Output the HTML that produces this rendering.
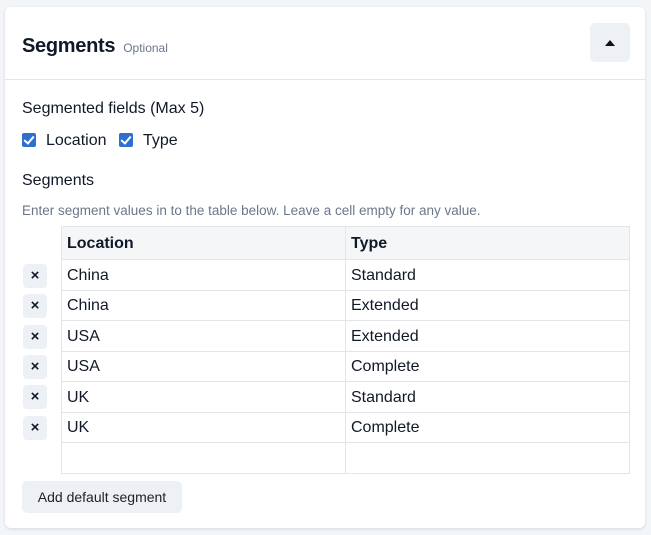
<!DOCTYPE html>
<html><head><style>
body{margin:0;background:#f3f6f9;font-family:"Liberation Sans",sans-serif;color:#111827;width:651px;height:535px;overflow:hidden;position:relative}
.card{position:absolute;left:5px;top:7px;width:640px;height:521px;background:#fff;border-radius:6px;box-shadow:0 1px 3px rgba(0,0,0,.12)}
.hdr{position:absolute;left:0;top:0;width:640px;height:72px;border-bottom:1px solid #e2e6ec}
.t{position:absolute;left:17px;top:28px;font-size:20px;font-weight:bold;letter-spacing:-0.3px}
.opt{font-size:12px;font-weight:normal;color:#6b7789;margin-left:8px;letter-spacing:0}
.tb{position:absolute;left:585px;top:16px;width:40px;height:39px;background:#edf1f5;border-radius:5px}
.tb:after{content:"";position:absolute;left:15px;top:17px;border-left:5px solid transparent;border-right:5px solid transparent;border-bottom:6px solid #111}
.a{position:absolute;font-size:16px}
.cb{display:inline-block;width:14px;height:14px;background:#2f6fce;border-radius:2px;vertical-align:-2px;position:relative;margin-right:10px}
.cb:after{content:"";position:absolute;left:4px;top:1px;width:4px;height:8px;border:solid #fff;border-width:0 2px 2px 0;transform:rotate(40deg)}
table{position:absolute;left:56px;top:219px;width:569px;border-collapse:collapse;font-size:16px}
td,th{border:1px solid #e3e5e8;height:27.5px;padding:2px 5px 0;text-align:left;width:50%}
th{background:#f5f6f8;height:30px}
.x{position:absolute;left:18px;width:24px;height:24px;background:#edf1f5;border-radius:4px;font-size:15px;font-weight:bold;text-align:center;line-height:24px}
.btn{position:absolute;left:17px;top:474px;width:160px;height:32px;background:#edf1f5;border-radius:5px;font-size:14px;line-height:32px;text-align:center;color:#222}
</style></head><body>
<div class="card">
<div class="hdr"><div class="t">Segments<span class="opt">Optional</span></div><div class="tb"></div></div>
<div class="a" style="left:17px;top:93px">Segmented fields (Max 5)</div>
<div class="a" style="left:17px;top:125px"><span class="cb"></span>Location <span class="cb" style="margin-left:8px"></span>Type</div>
<div class="a" style="left:17px;top:165px">Segments</div>
<div class="a" style="left:17px;top:196px;font-size:13.5px;color:#6b7789">Enter segment values in to the table below. Leave a cell empty for any value.</div>
<table>
<tr><th>Location</th><th>Type</th></tr>
<tr><td>China</td><td>Standard</td></tr>
<tr><td>China</td><td>Extended</td></tr>
<tr><td>USA</td><td>Extended</td></tr>
<tr><td>USA</td><td>Complete</td></tr>
<tr><td>UK</td><td>Standard</td></tr>
<tr><td>UK</td><td>Complete</td></tr>
<tr><td></td><td></td></tr>
</table>
<div class="x" style="top:257px">×</div>
<div class="x" style="top:287px">×</div>
<div class="x" style="top:318px">×</div>
<div class="x" style="top:348px">×</div>
<div class="x" style="top:378px">×</div>
<div class="x" style="top:409px">×</div>
<div class="btn">Add default segment</div>
</div>
</body></html>
